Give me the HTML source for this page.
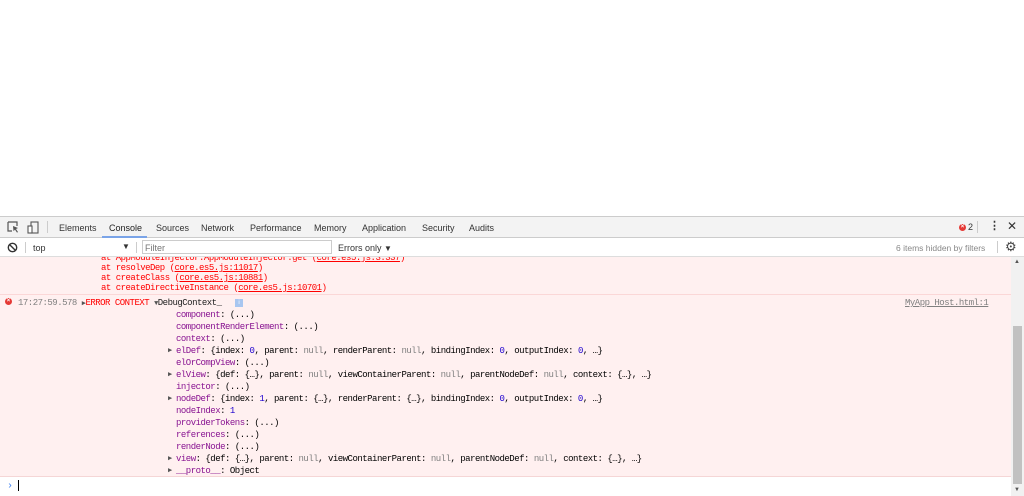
<!DOCTYPE html>
<html><head><meta charset="utf-8"><style>
*{margin:0;padding:0;box-sizing:border-box}
body{width:1024px;height:496px;overflow:hidden;background:#fff;position:relative;font-family:"Liberation Sans",sans-serif}
.abs{position:absolute}
#tb{left:0;top:216px;width:1024px;height:22px;background:#f3f3f3;border-top:1px solid #ccc;border-bottom:1px solid #ccc}
.tab{position:absolute;top:6px;font-size:9px;color:#333}
#fb{left:0;top:238px;width:1024px;height:19px;background:#fff;border-bottom:1px solid #ddd}
#con{left:0;top:257px;width:1011px;height:220px;background:#fff0f0;overflow:hidden;border-bottom:1px solid #f5d6d6}
.m{position:absolute;font-family:"Liberation Mono",monospace;font-size:9px;letter-spacing:-0.5px;white-space:pre;line-height:12px}
.r{color:#f00}
.u{text-decoration:underline}
.p{color:#881391}
.n{color:#1c00cf}
.g{color:#808080}
.k{color:#222}
.ar{font-size:7px;color:#555}
.ex{position:absolute;width:7px;height:7px;border-radius:50%;background:#e53935;color:#fff;font-size:6px;line-height:7px;text-align:center;font-weight:bold}
</style></head><body>
<div id="tb" class="abs">
<svg class="abs" style="left:7px;top:4px" width="12" height="12" viewBox="0 0 12 12"><path d="M1 1h9v4M1 1v9h4" fill="none" stroke="#555" stroke-width="1.2"/><path d="M6 5l5 2-2 1 2 3-1 .6-2-3-1.5 1.5z" fill="#555"/></svg>
<svg class="abs" style="left:27px;top:4px" width="12" height="13" viewBox="0 0 12 13"><rect x="4" y="1" width="7" height="11" fill="none" stroke="#555" stroke-width="1.1"/><rect x="1" y="5" width="4" height="7" fill="#fff" stroke="#555" stroke-width="1.1"/></svg>
<div class="abs" style="left:47px;top:4px;width:1px;height:12px;background:#ccc"></div>
<span class="tab" style="left:59px">Elements</span>
<span class="tab" style="left:109px;color:#222">Console</span>
<div class="abs" style="left:102px;top:19px;width:45px;height:2px;background:#7aa4e8"></div>
<span class="tab" style="left:156px">Sources</span>
<span class="tab" style="left:201px">Network</span>
<span class="tab" style="left:250px">Performance</span>
<span class="tab" style="left:314px">Memory</span>
<span class="tab" style="left:362px">Application</span>
<span class="tab" style="left:422px">Security</span>
<span class="tab" style="left:469px">Audits</span>
<div class="ex" style="left:959px;top:7px">×</div>
<span class="tab" style="left:968px;top:5px">2</span>
<div class="abs" style="left:977px;top:4px;width:1px;height:12px;background:#ccc"></div>
<span class="tab" style="left:989px;top:2px;font-weight:bold;font-size:11px">⋮</span>
<span class="tab" style="left:1007px;top:2px;font-size:12px">✕</span>
</div>
<div id="fb" class="abs">
<svg class="abs" style="left:7px;top:4px" width="11" height="11" viewBox="0 0 11 11"><circle cx="5.5" cy="5.5" r="4.2" fill="none" stroke="#333" stroke-width="1.4"/><path d="M2.6 2.6l5.8 5.8" stroke="#333" stroke-width="1.4"/></svg>
<div class="abs" style="left:25px;top:4px;width:1px;height:11px;background:#ccc"></div>
<span class="tab" style="left:33px;top:5px">top</span>
<span class="tab" style="left:122px;top:4px;font-size:8px">▼</span>
<div class="abs" style="left:136px;top:4px;width:1px;height:11px;background:#ccc"></div>
<div class="abs" style="left:142px;top:2px;width:190px;height:14px;border:1px solid #ccc;background:#fff"></div>
<span class="tab" style="left:145px;top:5px;color:#757575">Filter</span>
<span class="tab" style="left:338px;top:5px">Errors only <span style="font-size:8px">▼</span></span>
<span class="tab" style="left:896px;top:5px;color:#888;font-size:8.5px">6 items hidden by filters</span>
<div class="abs" style="left:997px;top:3px;width:1px;height:12px;background:#ccc"></div>
<span class="tab" style="left:1005px;top:1px;font-size:13px;color:#444">⚙</span>
</div>
<div id="con" class="abs">
<div class="m r" style="left:101px;top:-5px">at AppModuleInjector.AppModuleInjector.get (<span class="u">core.es5.js:3.337</span>)</div>
<div class="m r" style="left:101px;top:5px">at resolveDep (<span class="u">core.es5.js:11017</span>)</div>
<div class="m r" style="left:101px;top:15px">at createClass (<span class="u">core.es5.js:10881</span>)</div>
<div class="m r" style="left:101px;top:25px">at createDirectiveInstance (<span class="u">core.es5.js:10701</span>)</div>
<div class="abs" style="left:0;top:37px;width:1011px;height:1px;background:#fbd7d7"></div>
<div class="ex" style="left:5px;top:41px">×</div>
<div class="m g" style="left:18px;top:40px">17:27:59.578 <span class="ar">▶</span><span class="r">ERROR CONTEXT</span> <span class="k"><span class="ar">▼</span>DebugContext_</span></div>
<div class="abs" style="left:235px;top:42px;width:8px;height:8px;background:#a8c6f0;color:#fff;font-size:6px;line-height:8px;text-align:center">i</div>
<div class="m g u" style="left:905px;top:40px">MyApp Host.html:1</div>
<div class="m" style="left:176px;top:52px"><span class="p">component</span>: (...)
<span class="p">componentRenderElement</span>: (...)
<span class="p">context</span>: (...)
<span class="p">elDef</span>: {index: <span class="n">0</span>, parent: <span class="g">null</span>, renderParent: <span class="g">null</span>, bindingIndex: <span class="n">0</span>, outputIndex: <span class="n">0</span>, …}
<span class="p">elOrCompView</span>: (...)
<span class="p">elView</span>: {def: {…}, parent: <span class="g">null</span>, viewContainerParent: <span class="g">null</span>, parentNodeDef: <span class="g">null</span>, context: {…}, …}
<span class="p">injector</span>: (...)
<span class="p">nodeDef</span>: {index: <span class="n">1</span>, parent: {…}, renderParent: {…}, bindingIndex: <span class="n">0</span>, outputIndex: <span class="n">0</span>, …}
<span class="p">nodeIndex</span>: <span class="n">1</span>
<span class="p">providerTokens</span>: (...)
<span class="p">references</span>: (...)
<span class="p">renderNode</span>: (...)
<span class="p">view</span>: {def: {…}, parent: <span class="g">null</span>, viewContainerParent: <span class="g">null</span>, parentNodeDef: <span class="g">null</span>, context: {…}, …}
<span class="p">__proto__</span>: Object</div>
<div class="m ar" style="left:168px;top:88px">▶</div>
<div class="m ar" style="left:168px;top:112px">▶</div>
<div class="m ar" style="left:168px;top:136px">▶</div>
<div class="m ar" style="left:168px;top:196px">▶</div>
<div class="m ar" style="left:168px;top:208px">▶</div>
</div>
<div class="abs" style="left:1011px;top:257px;width:13px;height:239px;background:#f1f1f1"></div>
<div class="abs" style="left:1014px;top:259px;font-size:6px;color:#555">▲</div>
<div class="abs" style="left:1013px;top:326px;width:9px;height:158px;background:#c1c1c1"></div>
<div class="abs" style="left:1014px;top:487px;font-size:6px;color:#555">▼</div>
<div class="abs" style="left:7px;top:481px;font-size:10px;color:#367cf1;font-family:'Liberation Mono',monospace">›</div>
<div class="abs" style="left:18px;top:480px;width:1px;height:11px;background:#000"></div>
</body></html>
